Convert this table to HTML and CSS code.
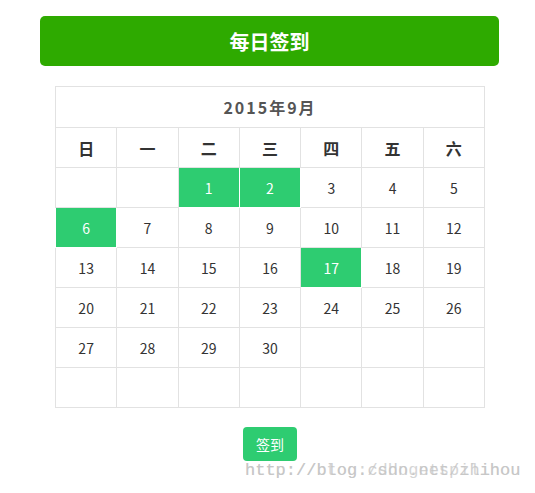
FILE: index.html
```html
<!DOCTYPE html>
<html lang="zh">
<head>
<meta charset="utf-8">
<link rel="stylesheet" href="styles.css">
</head>
<body>
<div class="page">
  <div class="banner">每日签到</div>
  <table class="cal">
    <tr><th colspan="7" class="title">2015年9月</th></tr>
    <tr class="week"><th>日</th><th>一</th><th>二</th><th>三</th><th>四</th><th>五</th><th>六</th></tr>
    <tr><td></td><td></td><td class="on">1</td><td class="on">2</td><td>3</td><td>4</td><td>5</td></tr>
    <tr><td class="on">6</td><td>7</td><td>8</td><td>9</td><td>10</td><td>11</td><td>12</td></tr>
    <tr><td>13</td><td>14</td><td>15</td><td>16</td><td class="on">17</td><td>18</td><td>19</td></tr>
    <tr><td>20</td><td>21</td><td>22</td><td>23</td><td>24</td><td>25</td><td>26</td></tr>
    <tr><td>27</td><td>28</td><td>29</td><td>30</td><td></td><td></td><td></td></tr>
    <tr><td></td><td></td><td></td><td></td><td></td><td></td><td></td></tr>
  </table>
  <div class="actions">
    <button class="sign">签到</button>
  </div>
  <div class="mark"><span>http://blog.csdn.net/zhihou</span><span class="b">http://btog:/dhogetspilihou</span></div>
</div>
</body>
</html>
```
FILE: styles.css
```css
html, body { margin: 0; padding: 0; background: #fff; }
body { font-family: "Noto Sans CJK SC", "Noto Sans", sans-serif; color: #333; }
.page { position: relative; width: 535px; height: 493px; padding-top: 16px; box-sizing: border-box; }
.banner {
  margin: 0 36px 0 40px; height: 50px; background: #2eaa00; border-radius: 5px;
  color: #fff; font-size: 20px; font-weight: bold; display: flex; align-items: center; justify-content: center;
}
.cal {
  margin: 20px 0 0 55px; width: 430px; border-collapse: collapse; table-layout: fixed;
}
.cal th, .cal td {
  border: 1px solid #e2e2e2; height: 39px; padding: 0; text-align: center; font-size: 14px; font-weight: normal;
}
.cal .title { height: 40px; font-size: 16px; font-weight: bold; color: #555; letter-spacing: 2px; }
.cal .week th { font-size: 16px; font-weight: bold; color: #333; }
.cal td.on { background: #2ecc71; color: #fff; border-color: #fff; }
.actions { display: flex; justify-content: center; margin-top: 19px; padding-left: 5px; }
.sign {
  width: 54px; height: 34px; border: 0; border-radius: 4px; background: #2ecc71; color: #fff;
  font-family: "Noto Sans CJK SC", sans-serif; font-size: 14px; padding: 0;
}
.mark {
  position: absolute; left: 245px; top: 461px; font-family: "Liberation Mono", monospace; font-size: 17px; color: #cfcfcf;
}
.mark span { position: absolute; left: 0; top: 0; white-space: nowrap; }
.mark .b { color: #c4c4c4; opacity: 0.7; }
```
